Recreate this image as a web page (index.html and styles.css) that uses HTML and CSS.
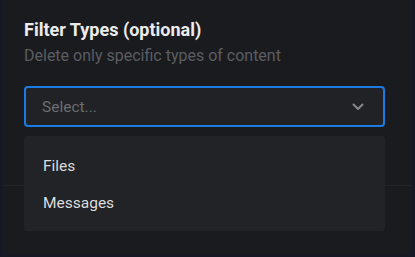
FILE: index.html
```html
<!DOCTYPE html>
<html lang="en">
<head>
  <meta charset="UTF-8">
  <title>Filter Types</title>
  <link rel="stylesheet" href="styles.css">
</head>
<body>
  <div class="frame">
    <div class="panel">
      <div class="field">
        <h3 class="label">Filter Types (optional)</h3>
        <p class="hint">Delete only specific types of content</p>
        <div class="select">
          <span class="placeholder">Select...</span>
          <svg class="chevron" width="12" height="8" viewBox="0 0 12 8">
            <path d="M1.5 1.5 L6 6 L10.5 1.5" fill="none" stroke="#86878b" stroke-width="2" stroke-linecap="round" stroke-linejoin="round"/>
          </svg>
        </div>
        <ul class="menu">
          <li>Files</li>
          <li>Messages</li>
        </ul>
      </div>
      <div class="footer"></div>
    </div>
  </div>
</body>
</html>
```

FILE: styles.css
```css
* {
  margin: 0;
  padding: 0;
  box-sizing: border-box;
}
body {
  width: 415px;
  height: 257px;
  overflow: hidden;
  background-color: #151923;
  font-family: Roboto, "Liberation Sans", sans-serif;
}
.frame {
  height: 257px;
  padding: 0 3px 2px 3px;
}
.panel {
  height: 100%;
  background-color: #1a1b1e;
}
.field {
  position: relative;
  padding: 19px 27px 0 21px;
  height: 186px;
  border-bottom: 1px solid #222327;
}
.label {
  font-size: 18px;
  font-weight: 700;
  line-height: 22px;
  color: #ececec;
}
.hint {
  margin-top: 5px;
  font-size: 16px;
  line-height: 20px;
  color: #5b5d62;
}
.select {
  display: flex;
  align-items: center;
  justify-content: space-between;
  margin-top: 20px;
  height: 41px;
  padding: 0 19px 0 16px;
  border: 2px solid #1b7be0;
  border-radius: 4px;
  background-color: #212226;
}
.placeholder {
  font-size: 15.5px;
  color: #6b6d72;
}
.menu {
  position: absolute;
  top: 136px;
  left: 21px;
  right: 27px;
  list-style: none;
  padding: 12px 0 9px;
  border-radius: 3px;
  background-color: #222327;
}
.menu li {
  height: 37px;
  line-height: 37px;
  padding-left: 19px;
  font-size: 15.5px;
  color: #dcdcdc;
}
```
